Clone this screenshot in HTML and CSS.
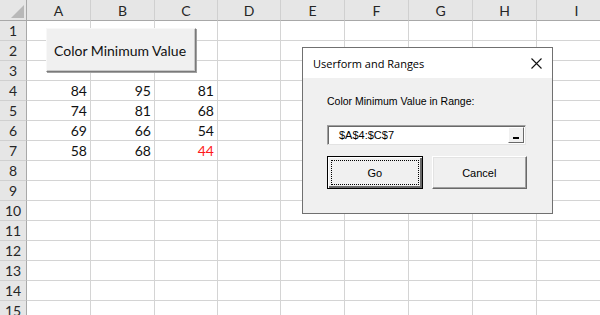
FILE: index.html
```html
<!DOCTYPE html>
<html>
<head>
<meta charset="utf-8">
<link rel="stylesheet" href="styles.css">
</head>
<body>
<div class="sheet">
  <div class="grid">
    <div class="corner"><span class="tri"></span></div>
    <div class="ch">A</div><div class="ch">B</div><div class="ch">C</div><div class="ch">D</div><div class="ch">E</div><div class="ch">F</div><div class="ch">G</div><div class="ch">H</div><div class="ch">I</div>

    <div class="rh">1</div><div class="c"></div><div class="c"></div><div class="c"></div><div class="c"></div><div class="c"></div><div class="c"></div><div class="c"></div><div class="c"></div><div class="c"></div>
    <div class="rh">2</div><div class="c"></div><div class="c"></div><div class="c"></div><div class="c"></div><div class="c"></div><div class="c"></div><div class="c"></div><div class="c"></div><div class="c"></div>
    <div class="rh">3</div><div class="c"></div><div class="c"></div><div class="c"></div><div class="c"></div><div class="c"></div><div class="c"></div><div class="c"></div><div class="c"></div><div class="c"></div>
    <div class="rh">4</div><div class="c n">84</div><div class="c n">95</div><div class="c n">81</div><div class="c"></div><div class="c"></div><div class="c"></div><div class="c"></div><div class="c"></div><div class="c"></div>
    <div class="rh">5</div><div class="c n">74</div><div class="c n">81</div><div class="c n">68</div><div class="c"></div><div class="c"></div><div class="c"></div><div class="c"></div><div class="c"></div><div class="c"></div>
    <div class="rh">6</div><div class="c n">69</div><div class="c n">66</div><div class="c n">54</div><div class="c"></div><div class="c"></div><div class="c"></div><div class="c"></div><div class="c"></div><div class="c"></div>
    <div class="rh">7</div><div class="c n">58</div><div class="c n">68</div><div class="c n red">44</div><div class="c"></div><div class="c"></div><div class="c"></div><div class="c"></div><div class="c"></div><div class="c"></div>
    <div class="rh">8</div><div class="c"></div><div class="c"></div><div class="c"></div><div class="c"></div><div class="c"></div><div class="c"></div><div class="c"></div><div class="c"></div><div class="c"></div>
    <div class="rh">9</div><div class="c"></div><div class="c"></div><div class="c"></div><div class="c"></div><div class="c"></div><div class="c"></div><div class="c"></div><div class="c"></div><div class="c"></div>
    <div class="rh">10</div><div class="c"></div><div class="c"></div><div class="c"></div><div class="c"></div><div class="c"></div><div class="c"></div><div class="c"></div><div class="c"></div><div class="c"></div>
    <div class="rh">11</div><div class="c"></div><div class="c"></div><div class="c"></div><div class="c"></div><div class="c"></div><div class="c"></div><div class="c"></div><div class="c"></div><div class="c"></div>
    <div class="rh">12</div><div class="c"></div><div class="c"></div><div class="c"></div><div class="c"></div><div class="c"></div><div class="c"></div><div class="c"></div><div class="c"></div><div class="c"></div>
    <div class="rh">13</div><div class="c"></div><div class="c"></div><div class="c"></div><div class="c"></div><div class="c"></div><div class="c"></div><div class="c"></div><div class="c"></div><div class="c"></div>
    <div class="rh">14</div><div class="c"></div><div class="c"></div><div class="c"></div><div class="c"></div><div class="c"></div><div class="c"></div><div class="c"></div><div class="c"></div><div class="c"></div>
    <div class="rh">15</div><div class="c"></div><div class="c"></div><div class="c"></div><div class="c"></div><div class="c"></div><div class="c"></div><div class="c"></div><div class="c"></div><div class="c"></div>
  </div>

  <button class="macro-btn">Color Minimum Value</button>

  <div class="dialog">
    <div class="titlebar">
      <span class="title">Userform and Ranges</span>
      <svg class="close" width="11" height="11" viewBox="0 0 11 11"><path d="M0.5 0.5 L10.5 10.5 M10.5 0.5 L0.5 10.5" stroke="#111" stroke-width="1.1" fill="none"/></svg>
    </div>
    <div class="body">
      <div class="label">Color Minimum Value in Range:</div>
      <div class="refedit">
        <span class="reftext">$A$4:$C$7</span>
        <span class="refbtn"><span class="dash"></span></span>
      </div>
      <div class="buttons">
        <div class="btn go"><span class="focus">Go</span></div>
        <div class="btn">Cancel</div>
      </div>
    </div>
  </div>
</div>
</body>
</html>
```

FILE: styles.css
```css
html, body {
  margin: 0;
  padding: 0;
  background: #ffffff;
}
.sheet {
  position: relative;
  width: 600px;
  height: 315px;
  overflow: hidden;
}
.grid {
  display: grid;
  grid-template-columns: 27px 64px 64px 63px 63px 64px 64px 64px 64px 80px;
  grid-template-rows: 21px repeat(15, 20px);
  font-family: "Lato", "Liberation Sans", sans-serif;
  font-size: 14px;
  color: #222;
}
.grid > div {
  box-sizing: border-box;
  border-right: 1px solid #d4d4d4;
  border-bottom: 1px solid #d4d4d4;
}
.corner {
  background: #e6e6e6;
  position: relative;
  border-right: 1px solid #a8a8a8 !important;
  border-bottom: 1px solid #a8a8a8 !important;
}
.tri {
  position: absolute;
  right: 2px;
  bottom: 2px;
  width: 0;
  height: 0;
  border-left: 13px solid transparent;
  border-bottom: 13px solid #b8b8b8;
}
.ch {
  background: #e6e6e6;
  border-bottom: 1px solid #a8a8a8 !important;
  border-right: 1px solid #d0d0d0 !important;
  display: flex;
  align-items: center;
  justify-content: center;
  color: #262626;
  padding-top: 1px;
}
.rh {
  background: #e6e6e6;
  border-right: 1px solid #a8a8a8 !important;
  border-bottom: 1px solid #d0d0d0 !important;
  display: flex;
  align-items: center;
  justify-content: center;
  color: #262626;
}
.c.n {
  display: flex;
  align-items: center;
  justify-content: flex-end;
  padding-right: 3px;
  color: #111;
}
.c.red {
  color: #ff1a1a;
}

.macro-btn {
  position: absolute;
  left: 46px;
  top: 28px;
  width: 150px;
  height: 44px;
  box-sizing: border-box;
  background: #f0f0f0;
  border: 1px solid #f8f8f8;
  border-right: 1px solid #7a7a7a;
  border-bottom: 1px solid #7a7a7a;
  box-shadow: 1px 1px 0 #a0a0a0, inset -1px -1px 0 #c8c8c8;
  font-family: "Lato", "Liberation Sans", sans-serif;
  font-size: 14px;
  color: #111;
  text-align: left;
  padding: 0 0 0 7px;
}

.dialog {
  position: absolute;
  left: 302px;
  top: 47px;
  width: 251px;
  height: 167px;
  box-sizing: border-box;
  border: 1px solid #707070;
  background: #f0f0f0;
  display: flex;
  flex-direction: column;
}
.titlebar {
  height: 30px;
  background: #ffffff;
  display: flex;
  align-items: center;
  justify-content: space-between;
  padding: 0 10px 0 10px;
  flex: none;
}
.title {
  font-family: "Open Sans", "Noto Sans", sans-serif;
  font-size: 11px;
  color: #000;
}
.close {
  display: block;
}
.body {
  padding: 16px 25px 0 24px;
  font-family: "Liberation Sans", "Arial", sans-serif;
  font-size: 11px;
  color: #000;
}
.label {
  height: 14px;
  line-height: 14px;
  font-size: 10.5px;
}
.refedit {
  margin-top: 17px;
  height: 20px;
  width: 199px;
  box-sizing: border-box;
  background: #fff;
  border-top: 1px solid #a0a0a0;
  border-left: 1px solid #a0a0a0;
  border-right: 1px solid #e3e3e3;
  border-bottom: 1px solid #e3e3e3;
  box-shadow: inset 1px 1px 0 #696969;
  display: flex;
  align-items: center;
  justify-content: space-between;
}
.reftext {
  padding-left: 11px;
  font-size: 11px;
}
.refbtn {
  width: 16px;
  height: 16px;
  margin-right: 1px;
  box-sizing: border-box;
  background: #f0f0f0;
  border-top: 1px solid #fff;
  border-left: 1px solid #fff;
  border-right: 1px solid #696969;
  border-bottom: 1px solid #696969;
  position: relative;
}
.dash {
  position: absolute;
  left: 4px;
  bottom: 3px;
  width: 6px;
  height: 2px;
  background: #000;
}
.buttons {
  display: flex;
  gap: 9px;
  margin-top: 11px;
}
.btn {
  width: 96px;
  height: 33px;
  box-sizing: border-box;
  background: #f0f0f0;
  border-top: 1px solid #fff;
  border-left: 1px solid #fff;
  border-right: 1px solid #696969;
  border-bottom: 1px solid #696969;
  box-shadow: inset -1px -1px 0 #a0a0a0, inset 1px 1px 0 #e3e3e3;
  display: flex;
  align-items: center;
  justify-content: center;
  font-size: 11px;
}
.btn.go {
  border: 1px solid #000;
  box-shadow: inset 1px 1px 0 #fff, inset -2px -2px 0 #696969;
  padding: 3px;
}
.focus {
  width: 100%;
  height: 100%;
  box-sizing: border-box;
  border: 1px dotted #000;
  display: flex;
  align-items: center;
  justify-content: center;
}
```
